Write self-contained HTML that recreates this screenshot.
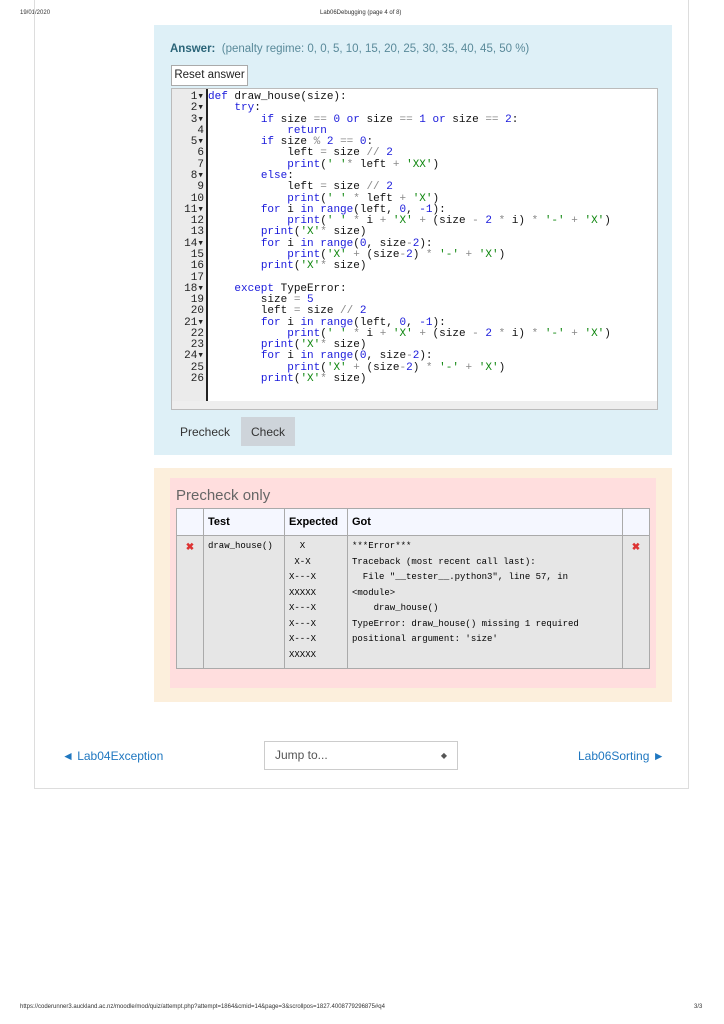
<!DOCTYPE html>
<html><head><meta charset="utf-8"><style>
body{margin:0;width:724px;height:1024px;background:#fff;font-family:"Liberation Sans",sans-serif;position:relative;overflow:hidden}
.a{position:absolute}
.hdr{font-size:6px;color:#333}
.page{left:34px;top:0;width:655px;height:789px;border:1px solid #ddd;border-top:none;box-sizing:border-box}
.ans{left:154px;top:25px;width:518px;height:430px;background:#def0f7}
.ed{left:171px;top:88px;width:487px;height:322px;background:#eee;border:1px solid #bbb;box-sizing:border-box}
.gut{left:0;top:0;width:32px;padding-right:2px;padding-top:3px;height:309px;background:#ebebeb;border-right:2px solid #222;font-family:"Liberation Mono",monospace;font-size:11px;line-height:11.28px;text-align:right;color:#222}
.code{left:36px;top:0;padding-top:3px;width:449px;height:309px;background:#fff;font-family:"Liberation Mono",monospace;font-size:11px;line-height:11.28px;white-space:pre;color:#111}
.k{color:#1a1adb}.s{color:#118811}.o{color:#888}.n{color:#1a1adb}
.res{left:154px;top:468px;width:518px;height:234px;background:#fcefdc}
.pk{left:170px;top:478px;width:486px;height:210px;background:#ffdede}
table{border-collapse:collapse;font-size:11px}
td,th{border:1px solid #aaa;vertical-align:top;padding:0 4px}
th{background:#f5f7ff;text-align:left;height:26px;vertical-align:middle}
.m{font-family:"Liberation Mono",monospace;font-size:9px;line-height:15.5px;white-space:pre}
.x{color:#d33;font-weight:bold;font-size:10px}
</style></head><body>
<div class="a hdr" style="left:20px;top:10px">19/01/2020</div>
<div class="a hdr" style="left:320px;top:10px">Lab06Debugging (page 4 of 8)</div>
<div class="a page"></div>
<div class="a ans">
 <div class="a" style="left:16px;top:18px;font-size:11.5px;color:#5a8a9a"><b style="color:#2a6478">Answer:</b>&nbsp; (penalty regime: 0, 0, 5, 10, 15, 20, 25, 30, 35, 40, 45, 50 %)</div>
 <div class="a" style="left:17px;top:40px;width:77px;height:21px;border:1px solid #aaa;background:#fff;box-sizing:border-box;font-size:11.5px;line-height:19px;text-align:center;color:#222">Reset answer</div>
 <div class="a" style="left:14px;top:393px;font-size:12px;color:#333;line-height:28px;padding:0 12px">Precheck</div>
 <div class="a" style="left:87px;top:392px;width:54px;height:29px;background:#ced4da;font-size:12px;color:#333;line-height:31px;text-align:center">Check</div>
</div>
<div class="a ed">
<div class="a gut">1▾<br>2▾<br>3▾<br>4 <br>5▾<br>6 <br>7 <br>8▾<br>9 <br>10 <br>11▾<br>12 <br>13 <br>14▾<br>15 <br>16 <br>17 <br>18▾<br>19 <br>20 <br>21▾<br>22 <br>23 <br>24▾<br>25 <br>26 </div>
<div class="a code"><span class="k">def</span> draw_house(size):
    <span class="k">try</span>:
        <span class="k">if</span> size <span class="o">==</span> <span class="n">0</span> <span class="k">or</span> size <span class="o">==</span> <span class="n">1</span> <span class="k">or</span> size <span class="o">==</span> <span class="n">2</span>:
            <span class="k">return</span>
        <span class="k">if</span> size <span class="o">%</span> <span class="n">2</span> <span class="o">==</span> <span class="n">0</span>:
            left <span class="o">=</span> size <span class="o">//</span> <span class="n">2</span>
            <span class="k">print</span>(<span class="s">' '</span><span class="o">*</span> left <span class="o">+</span> <span class="s">'XX'</span>)
        <span class="k">else</span>:
            left <span class="o">=</span> size <span class="o">//</span> <span class="n">2</span>
            <span class="k">print</span>(<span class="s">' '</span> <span class="o">*</span> left <span class="o">+</span> <span class="s">'X'</span>)
        <span class="k">for</span> i <span class="k">in</span> <span class="k">range</span>(left, <span class="n">0</span>, <span class="n">-1</span>):
            <span class="k">print</span>(<span class="s">' '</span> <span class="o">*</span> i <span class="o">+</span> <span class="s">'X'</span> <span class="o">+</span> (size <span class="o">-</span> <span class="n">2</span> <span class="o">*</span> i) <span class="o">*</span> <span class="s">'-'</span> <span class="o">+</span> <span class="s">'X'</span>)
        <span class="k">print</span>(<span class="s">'X'</span><span class="o">*</span> size)
        <span class="k">for</span> i <span class="k">in</span> <span class="k">range</span>(<span class="n">0</span>, size<span class="o">-</span><span class="n">2</span>):
            <span class="k">print</span>(<span class="s">'X'</span> <span class="o">+</span> (size<span class="o">-</span><span class="n">2</span>) <span class="o">*</span> <span class="s">'-'</span> <span class="o">+</span> <span class="s">'X'</span>)
        <span class="k">print</span>(<span class="s">'X'</span><span class="o">*</span> size)

    <span class="k">except</span> TypeError:
        size <span class="o">=</span> <span class="n">5</span>
        left <span class="o">=</span> size <span class="o">//</span> <span class="n">2</span>
        <span class="k">for</span> i <span class="k">in</span> <span class="k">range</span>(left, <span class="n">0</span>, <span class="n">-1</span>):
            <span class="k">print</span>(<span class="s">' '</span> <span class="o">*</span> i <span class="o">+</span> <span class="s">'X'</span> <span class="o">+</span> (size <span class="o">-</span> <span class="n">2</span> <span class="o">*</span> i) <span class="o">*</span> <span class="s">'-'</span> <span class="o">+</span> <span class="s">'X'</span>)
        <span class="k">print</span>(<span class="s">'X'</span><span class="o">*</span> size)
        <span class="k">for</span> i <span class="k">in</span> <span class="k">range</span>(<span class="n">0</span>, size<span class="o">-</span><span class="n">2</span>):
            <span class="k">print</span>(<span class="s">'X'</span> <span class="o">+</span> (size<span class="o">-</span><span class="n">2</span>) <span class="o">*</span> <span class="s">'-'</span> <span class="o">+</span> <span class="s">'X'</span>)
        <span class="k">print</span>(<span class="s">'X'</span><span class="o">*</span> size)</div>
</div>
<div class="a res"></div>
<div class="a pk">
 <div class="a" style="left:6px;top:9px;font-size:15px;color:#666">Precheck only</div>
 <table class="a" style="left:6px;top:30px;width:474px;background:#e6e6e6">
 <tr><th style="width:18px"></th><th style="width:72px">Test</th><th style="width:54px">Expected</th><th>Got</th><th style="width:18px"></th></tr>
 <tr style="height:133px"><td class="x" style="padding-top:6px;text-align:center">✖</td><td class="m" style="padding-top:3px">draw_house()</td><td class="m" style="padding-top:3px">  X
 X-X
X---X
XXXXX
X---X
X---X
X---X
XXXXX</td><td class="m" style="padding-top:3px">***Error***
Traceback (most recent call last):
  File "__tester__.python3", line 57, in
&lt;module&gt;
    draw_house()
TypeError: draw_house() missing 1 required
positional argument: 'size'</td><td class="x" style="padding-top:6px;text-align:center">✖</td></tr>
 </table>
</div>
<div class="a" style="left:62px;top:749px;font-size:12px;color:#1f77c0">◄ Lab04Exception</div>
<div class="a" style="left:264px;top:741px;width:194px;height:29px;border:1px solid #ccc;box-sizing:border-box;font-size:12px;color:#555;line-height:27px;padding-left:10px">Jump to...<span style="position:absolute;right:10px;font-size:8px">◆</span></div>
<div class="a" style="left:578px;top:749px;font-size:12px;color:#1f77c0">Lab06Sorting ►</div>
<div class="a hdr" style="left:20px;top:1004px">https://coderunner3.auckland.ac.nz/moodle/mod/quiz/attempt.php?attempt=1864&amp;cmid=14&amp;page=3&amp;scrollpos=1827.4008779296875#q4</div>
<div class="a hdr" style="left:694px;top:1004px">3/3</div>
</body></html>
